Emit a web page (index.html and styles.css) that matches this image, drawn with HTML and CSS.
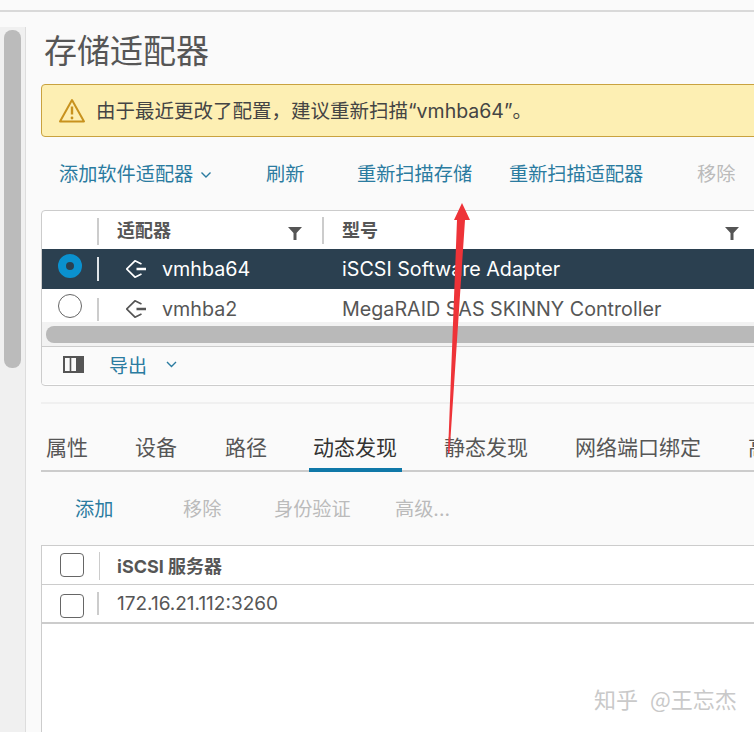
FILE: index.html
```html
<!DOCTYPE html>
<html lang="en">
<head>
  <meta charset="UTF-8" />
  <title>存储适配器</title>
  <link rel="stylesheet" href="styles.css">
</head>
<body>
  <div class="topbar"></div>
  <div class="layout">
    <aside class="side"><div class="side-thumb"></div></aside>
    <main class="main">
      <h1 class="title">存储适配器</h1>

      <div class="alert">
        <svg class="alert-icon" width="28" height="26" viewBox="0 0 28 26">
          <path d="M14 2 L26 23.5 H2 Z" fill="none" stroke="#c8921e" stroke-width="2" stroke-linejoin="round"/>
          <path d="M14 8.5 V16.5" stroke="#c8921e" stroke-width="2.4"/>
          <circle cx="14" cy="20" r="1.4" fill="#c8921e"/>
        </svg>
        <span>由于最近更改了配置，建议重新扫描“vmhba64”。</span>
      </div>

      <div class="toolbar">
        <a class="act act-add">添加软件适配器
          <svg width="12" height="8" viewBox="0 0 12 8"><path d="M1.5 1.5 L6 6 L10.5 1.5" fill="none" stroke="#2a7ba0" stroke-width="1.4"/></svg>
        </a>
        <a class="act act-refresh">刷新</a>
        <a class="act act-store">重新扫描存储</a>
        <a class="act act-adapter">重新扫描适配器</a>
        <a class="act off">移除</a>
      </div>

      <div class="grid">
        <div class="row head">
          <div class="c-sel"><i class="sep"></i></div>
          <div class="c-name">适配器
            <svg class="filter" width="14" height="13" viewBox="0 0 14 13"><path d="M0 0 H14 L8.5 6 V13 H5.5 V6 Z" fill="#555"/></svg>
          </div>
          <div class="c-model">型号
            <svg class="filter" width="14" height="13" viewBox="0 0 14 13"><path d="M0 0 H14 L8.5 6 V13 H5.5 V6 Z" fill="#555"/></svg>
          </div>
        </div>
        <div class="row item selected">
          <div class="c-sel"><span class="radio on"></span><i class="sep"></i></div>
          <div class="c-name">
            <svg class="hba" width="20" height="18" viewBox="0 0 20 18"><path d="M15.5 4 L9 0.8 L0.8 9 L9 17.2 L15.5 14" fill="none" stroke="#fff" stroke-width="1.7"/><path d="M10.5 9 H20" stroke="#fff" stroke-width="2.4"/></svg>
            vmhba64
          </div>
          <div class="c-model">iSCSI Software Adapter</div>
        </div>
        <div class="row item last">
          <div class="c-sel"><span class="radio"></span><i class="sep"></i></div>
          <div class="c-name">
            <svg class="hba" width="20" height="18" viewBox="0 0 20 18"><path d="M15.5 4 L9 0.8 L0.8 9 L9 17.2 L15.5 14" fill="none" stroke="#555" stroke-width="1.7"/><path d="M10.5 9 H20" stroke="#555" stroke-width="2.4"/></svg>
            vmhba2
          </div>
          <div class="c-model">MegaRAID SAS SKINNY Controller</div>
        </div>
        <div class="hscroll"><div class="hscroll-thumb"></div></div>
        <div class="grid-foot">
          <svg width="21" height="17" viewBox="0 0 21 17"><rect x="1" y="1" width="19" height="15" fill="none" stroke="#555" stroke-width="2"/><path d="M7.5 1 V16" stroke="#555" stroke-width="1.6"/><rect x="13" y="1" width="7" height="15" fill="#555"/></svg>
          <a class="export">导出</a>
          <svg width="11" height="7" viewBox="0 0 11 7"><path d="M1 1 L5.5 5.5 L10 1" fill="none" stroke="#2a7ba0" stroke-width="1.4"/></svg>
        </div>
      </div>

      <div class="tabs">
        <a class="tab t1">属性</a>
        <a class="tab t2">设备</a>
        <a class="tab t3">路径</a>
        <a class="tab t4 active">动态发现</a>
        <a class="tab t5">静态发现</a>
        <a class="tab t6">网络端口绑定</a>
        <a class="tab">高级选项</a>
      </div>

      <div class="subbar">
        <a class="act s1">添加</a>
        <a class="act off s2">移除</a>
        <a class="act off s3">身份验证</a>
        <a class="act off">高级...</a>
      </div>

      <div class="servers">
        <div class="srow shead">
          <div class="s-sel"><span class="check"></span><i class="sep"></i></div>
          <div>iSCSI 服务器</div>
        </div>
        <div class="srow sitem">
          <div class="s-sel"><span class="check"></span><i class="sep"></i></div>
          <div>172.16.21.112:3260</div>
        </div>
      </div>
    </main>
  </div>

  <svg class="arrow" width="30" height="256" viewBox="0 0 30 256">
    <path d="M16 0 L24 17 L19 17 L3.5 250 L2 250 L11 17 L8 17 Z" fill="#ee3338"/>
  </svg>
  <div class="mark">知乎 @王忘杰</div>
</body>
</html>
```

FILE: styles.css
```css
* { box-sizing: border-box; }
html, body { margin: 0; padding: 0; }
body { width: 754px; height: 732px; overflow: hidden; position: relative; background: #fafafa; color: #565656; font-family: "Inter", "Noto Sans CJK SC", sans-serif; font-size: 19px; }
a { display: inline-block; }

.topbar { height: 12px; border-bottom: 2px solid #d9d9d9; }
.layout { display: flex; height: 720px; }
.side { width: 26px; flex: none; margin-top: 15px; padding: 3px 4px 0; background: #f0f0f0; border-right: 1px solid #ddd; }
.side-thumb { width: 17px; height: 338px; background: #bbb; border-radius: 8px; }
.main { flex: 1; min-width: 0; padding-left: 15px; overflow: hidden; }

.title { margin: 0; height: 72px; padding-left: 3px; font-size: 33px; font-weight: 400; line-height: 78px; color: #565656; }

.alert { display: flex; align-items: center; height: 53px; width: 740px; padding: 0 0 3px 16px; background: #fdefb3; border: 1px solid #c9a23f; border-radius: 4px; color: #444; font-size: 19.5px; }
.alert-icon { margin: 3px 10px 0 0; }

.toolbar { display: flex; align-items: center; height: 73px; padding: 0 0 2px 18px; }
.act { color: #2a7ba0; white-space: nowrap; font-size: 19.2px; }
.act.off { color: #bbb; }
.act-add { width: 207px; }
.act-add svg { margin-left: 1px; vertical-align: 2px; }
.act-refresh { width: 91px; }
.act-store { width: 152px; }
.act-adapter { width: 188px; }

.grid { width: 740px; height: 176px; background: #fff; border: 1px solid #ccc; border-radius: 4px 0 0 4px; overflow: hidden; }
.row { display: grid; grid-template-columns: 56px 225px 1fr; align-items: center; }
.head { height: 38px; font-size: 18px; font-weight: 700; }
.item { height: 40px; font-size: 19.7px; }
.item.last { height: 33px; }
.selected { background: #2b4050; color: #fff; }
.c-sel { position: relative; height: 100%; display: flex; align-items: center; padding-left: 16px; }
.sep { position: absolute; left: 55px; top: 7px; width: 2px; height: 27px; background: #ccc; }
.selected .sep { background: #dfe4e8; top: 8px; height: 24px; }
.last .sep { top: 9px; height: 23px; }
.c-name { position: relative; padding-left: 19px; height: 100%; display: flex; align-items: center; }
.c-model { position: relative; padding-left: 19px; height: 100%; display: flex; align-items: center; }
.head .c-name, .head .c-model { padding-bottom: 2px; }
.selected .c-name, .selected .c-model { padding-bottom: 1px; }
.last .c-name, .last .c-model { padding-top: 6px; }
.head .c-name::after { content: ""; position: absolute; right: -1px; top: 6px; width: 2px; height: 27px; background: #ccc; }
.filter { position: absolute; }
.head .c-name .filter { left: 190px; top: 16px; }
.head .c-model .filter { left: 402px; top: 16px; }
.hba { margin: 0 16px 0 9px; }
.radio { display: block; width: 24px; height: 24px; margin-top: -6px; border-radius: 50%; border: 1px solid #666; background: #fff; }
.last .radio { margin-top: 0; }
.radio.on { border: 8.5px solid #0a91cf; background: #2b4050; }

.hscroll { height: 25px; padding: 4px 4px 0; background: #f2f2f2; border-bottom: 1px solid #ccc; }
.hscroll-thumb { height: 17px; width: 800px; background: #b9b9b9; border-radius: 8px; }
.grid-foot { display: flex; align-items: center; height: 37px; padding: 0 0 2px 21px; background: #fafafa; }
.export { margin: 0 19px 0 25px; color: #2a7ba0; }

.tabs { display: flex; height: 70px; margin-top: 16px; padding-left: 5px; width: 740px; border-top: 2px solid #f0f0f0; border-bottom: 2px solid #ccc; font-size: 21px; }
.tab { position: relative; height: 66px; line-height: 87px; white-space: nowrap; flex: none; }
.t1 { width: 89px; }
.t2 { width: 90px; }
.t3 { width: 88px; }
.t4 { width: 131px; color: #333; }
.t5 { width: 131px; }
.t6 { width: 173px; }
.active::after { content: ""; position: absolute; left: -4px; right: 42px; bottom: -2px; height: 4px; background: #0f78a8; }

.subbar { display: flex; align-items: center; height: 73px; padding: 0 0 2px 34px; }
.s1 { width: 108px; }
.s2 { width: 91px; }
.s3 { width: 121px; }

.servers { width: 740px; height: 200px; background: #fff; border-top: 1px solid #ccc; border-left: 1px solid #ccc; }
.srow { display: grid; grid-template-columns: 56px 1fr; align-items: center; }
.shead { height: 39px; border-bottom: 1px solid #ccc; font-size: 18px; font-weight: 700; }
.sitem { height: 39px; border-bottom: 2px solid #ccc; font-size: 19px; }
.srow > div:last-child { padding-left: 19px; }
.s-sel { position: relative; height: 100%; display: flex; align-items: center; padding-left: 18px; }
.check { display: block; width: 24px; height: 24px; background: #fff; border: 1px solid #666; border-radius: 4px; }
.shead .check { margin-top: -1px; }
.sitem .check { margin-top: 5px; }
.s-sel .sep { left: 57px; top: 6px; width: 1px; height: 28px; }
.sitem .sep { left: 55px; top: 7px; height: 23px; width: 2px; }

.arrow { position: absolute; left: 446px; top: 203px; }
.mark { position: absolute; left: 594px; top: 682px; font-size: 22px; color: #c9c9c9; font-family: "Noto Sans CJK SC", sans-serif; white-space: nowrap; word-spacing: 7px; }
```
